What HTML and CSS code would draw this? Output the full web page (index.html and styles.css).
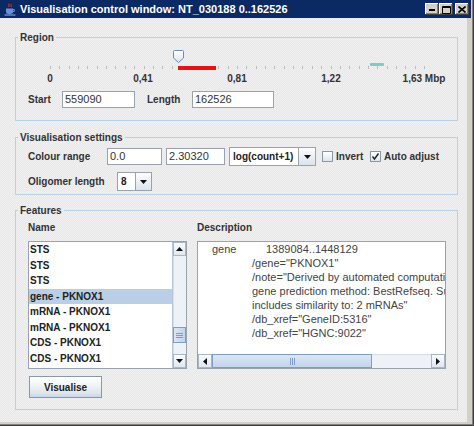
FILE: index.html
```html
<!DOCTYPE html>
<html>
<head>
<meta charset="utf-8">
<title>Visualisation control window</title>
<link rel="stylesheet" href="styles.css">
</head>
<body>
<div class="window">
  <div class="titlebar">
    <svg class="app-icon" width="12" height="13" viewBox="0 0 12 13">
      <path d="M5 0.5c-1.2 1 1 2-0.2 3.5M7.2 1c-1 1 0.8 1.8-0.2 3" stroke="#e23a2a" stroke-width="1" fill="none"/>
      <path d="M2 5.5h7v3a2.5 2.5 0 0 1-2.5 2.5h-2A2.5 2.5 0 0 1 2 8.5z" fill="#6f8fd8"/>
      <path d="M9 6.5h1.3v2H9" stroke="#6f8fd8" fill="none"/>
      <path d="M0.5 12h11" stroke="#9fb4e6"/>
    </svg>
    <span class="title">Visualisation control window: NT_030188 0..162526</span>
    <div class="wbtns">
      <span class="wbtn"><svg width="6" height="2" viewBox="0 0 6 2"><rect width="6" height="2" fill="#000"/></svg></span>
      <span class="wbtn"><svg width="9" height="8" viewBox="0 0 9 8"><path d="M0.5 0.5h8v7h-8z M0.5 1.5h8" stroke="#000" fill="none"/></svg></span>
      <span class="wbtn close"><svg width="8" height="7" viewBox="0 0 8 7"><path d="M0.5 0.5l7 6M7.5 0.5l-7 6" stroke="#000" stroke-width="1.6" fill="none"/></svg></span>
    </div>
  </div>

  <div class="body">
    <fieldset class="panel region">
      <legend>Region</legend>
      <div class="panel-body region-body">
        <div class="slider">
          <svg class="ticks" width="418" height="4" viewBox="0 0 418 4">
            <path d="M22.5 0v3M31.5 0v3M41.5 0v3M50.5 0v3M59.5 0v3M69.5 0v3M78.5 0v3M87.5 0v3M97.5 0v3M106.5 0v3M116.5 0v3M125.5 0v3M134.5 0v3M144.5 0v3M153.5 0v3M162.5 0v3M172.5 0v3M181.5 0v3M190.5 0v3M200.5 0v3M209.5 0v3M218.5 0v3M228.5 0v3M237.5 0v3M246.5 0v3M256.5 0v3M265.5 0v3M274.5 0v3M284.5 0v3M293.5 0v3M303.5 0v3M312.5 0v3M321.5 0v3M331.5 0v3M340.5 0v3M349.5 0v3M359.5 0v3M368.5 0v3M377.5 0v3M387.5 0v3M396.5 0v3" stroke="#bcbcbc" stroke-width="1"/>
          </svg>
          <span class="sel-bar"></span>
          <span class="view-bar"></span>
          <svg class="thumb" width="13" height="15" viewBox="0 0 13 15">
            <defs>
              <linearGradient id="tg" x1="0" y1="0" x2="0" y2="1">
                <stop offset="0" stop-color="#ffffff"/>
                <stop offset="1" stop-color="#d9e5f2"/>
              </linearGradient>
            </defs>
            <path d="M1.5 2.5a1 1 0 0 1 1-1h8a1 1 0 0 1 1 1v6.5l-5 4.5-5-4.5z" fill="url(#tg)" stroke="#6b8db3"/>
          </svg>
          <span class="tick-label l0">0</span>
          <span class="tick-label l1">0,41</span>
          <span class="tick-label l2">0,81</span>
          <span class="tick-label l3">1,22</span>
          <span class="tick-label l4">1,63 Mbp</span>
        </div>
        <div class="row region-row">
          <span class="lbl w-start">Start</span>
          <span class="field w-startf">559090</span>
          <span class="lbl w-length">Length</span>
          <span class="field w-lengthf">162526</span>
        </div>
      </div>
    </fieldset>

    <fieldset class="panel settings">
      <legend>Visualisation settings</legend>
      <div class="panel-body settings-body">
        <div class="row">
          <span class="lbl w-colour">Colour range</span>
          <span class="field w-min">0.0</span>
          <span class="field w-max">2.30320</span>
          <div class="combo w-log">
            <span class="combo-val">log(count+1)</span>
            <span class="combo-btn w-logbtn"><svg width="7" height="4" viewBox="0 0 7 4"><path d="M0 0h7L3.5 4z" fill="#111"/></svg></span>
          </div>
          <span class="check"></span>
          <span class="lbl w-invert">Invert</span>
          <span class="check checked"><svg width="9" height="9" viewBox="0 0 9 9"><path d="M1.5 4.5l2 2.5 4-5.5" stroke="#222" stroke-width="1.4" fill="none"/></svg></span>
          <span class="lbl">Auto adjust</span>
        </div>
        <div class="row row2">
          <span class="lbl w-olig">Oligomer length</span>
          <div class="combo w-8">
            <span class="combo-val">8</span>
            <span class="combo-btn w-8btn"><svg width="7" height="4" viewBox="0 0 7 4"><path d="M0 0h7L3.5 4z" fill="#111"/></svg></span>
          </div>
        </div>
      </div>
    </fieldset>

    <fieldset class="panel features">
      <legend>Features</legend>
      <div class="panel-body features-body">
        <div class="feat-grid">
          <div class="col-head">Name</div>
          <div class="col-head">Description</div>
          <div class="list-box">
            <div class="list">
              <div class="item">STS</div>
              <div class="item">STS</div>
              <div class="item">STS</div>
              <div class="item sel">gene - PKNOX1</div>
              <div class="item">mRNA - PKNOX1</div>
              <div class="item">mRNA - PKNOX1</div>
              <div class="item">CDS - PKNOX1</div>
              <div class="item">CDS - PKNOX1</div>
            </div>
            <div class="vscroll">
              <span class="sbtn"><svg width="7" height="4" viewBox="0 0 7 4"><path d="M0 4h7L3.5 0z" fill="#111"/></svg></span>
              <div class="vtrack">
                <span class="vthumb"><svg width="7" height="5" viewBox="0 0 7 5"><path d="M0 0.5h7M0 2.5h7M0 4.5h7" stroke="#7f9dc4"/></svg></span>
              </div>
              <span class="sbtn"><svg width="7" height="4" viewBox="0 0 7 4"><path d="M0 0h7L3.5 4z" fill="#111"/></svg></span>
            </div>
          </div>
          <div class="desc-box">
            <div class="desc-text">
              <div class="dl first"><span class="dk">gene</span><span>1389084..1448129</span></div>
              <div class="dl">/gene="PKNOX1"</div>
              <div class="dl">/note="Derived by automated computational analysis using</div>
              <div class="dl">gene prediction method: BestRefseq. Supporting evidence</div>
              <div class="dl">includes similarity to: 2 mRNAs"</div>
              <div class="dl">/db_xref="GeneID:5316"</div>
              <div class="dl">/db_xref="HGNC:9022"</div>
            </div>
            <div class="hscroll">
              <span class="sbtn h"><svg width="4" height="7" viewBox="0 0 4 7"><path d="M4 0v7L0 3.5z" fill="#111"/></svg></span>
              <span class="hthumb"><svg width="5" height="7" viewBox="0 0 5 7"><path d="M0.5 0v7M2.5 0v7M4.5 0v7" stroke="#7f9dc4"/></svg></span>
              <span class="htrack"></span>
              <span class="sbtn h"><svg width="4" height="7" viewBox="0 0 4 7"><path d="M0 0v7L4 3.5z" fill="#111"/></svg></span>
            </div>
          </div>
        </div>
        <button class="btn">Visualise</button>
      </div>
    </fieldset>
  </div>
</div>
</body>
</html>
```

FILE: styles.css
```css
* { box-sizing: border-box; }

html, body {
  margin: 0;
  padding: 0;
}

body {
  width: 474px;
  height: 426px;
  overflow: hidden;
  font-family: "Liberation Sans", Arial, sans-serif;
  background: #d4d0c8;
}

.window {
  width: 474px;
  height: 426px;
  display: flex;
  flex-direction: column;
  background: #d4d0c8;
  padding: 0 3px 3px 0;
  box-shadow: inset -1px -1px 0 #404040, inset -2px -2px 0 #808080;
}

/* title bar */
.titlebar {
  height: 18px;
  flex: none;
  display: flex;
  align-items: center;
  padding-left: 4px;
  background: #0b2a63;
  color: #fff;
}

.app-icon {
  flex: none;
  margin-right: 4px;
}

.title {
  flex: 1;
  font-size: 11px;
  font-weight: bold;
  white-space: nowrap;
}

.wbtns {
  display: flex;
  margin-right: 2px;
}

.wbtn {
  width: 14px;
  height: 12px;
  display: flex;
  align-items: center;
  justify-content: center;
  background: #d4d0c8;
  box-shadow: inset -1px -1px 0 #404040, inset 1px 1px 0 #ffffff, inset -2px -2px 0 #808080;
}

.wbtn svg { margin-top: 1px; }

.wbtn.close { margin-left: 2px; }

/* client area */
.body {
  flex: 1;
  margin: 0 4px 1px 0;
  padding-top: 13px;
  background-color: #ececec;
  background-image: repeating-conic-gradient(#e8e8e8 0 25%, #f0f0f0 0 50%);
  background-size: 2px 2px;
}

.panel {
  margin: 0 0 0 15px;
  width: 443px;
  min-width: 0;
  padding: 0;
  border: 1px solid #b8cfe5;
}

.panel legend {
  margin-left: 2px;
  padding: 0 2px;
  font-size: 10px;
  font-weight: bold;
  line-height: 13px;
  color: #333;
}

.settings { margin-top: 10px; }
.features { margin-top: 9px; }

.panel-body { padding: 0 11px 11px 12px; }
.settings-body { padding: 3px 11px 3px 12px; }
.features-body { padding: 4px 11px 11px 12px; }

/* slider */
.slider {
  position: relative;
  height: 42px;
}

.ticks {
  position: absolute;
  left: 0;
  top: 22px;
}

.sel-bar {
  position: absolute;
  left: 150px;
  top: 22px;
  width: 38px;
  height: 4px;
  background: #e41414;
}

.view-bar {
  position: absolute;
  left: 342px;
  top: 19px;
  width: 14px;
  height: 3px;
  border-radius: 1px;
  background: #8cc5c5;
}

.thumb {
  position: absolute;
  left: 144px;
  top: 5px;
}

.tick-label {
  position: absolute;
  top: 29px;
  font-size: 10px;
  font-weight: bold;
  line-height: 12px;
  color: #333;
  white-space: nowrap;
  transform: translateX(-50%);
}

.l0 { left: 22px; }
.l1 { left: 115px; }
.l2 { left: 209px; }
.l3 { left: 303px; }
.l4 { left: 396px; }

/* rows */
.row {
  display: flex;
  align-items: center;
  height: 19px;
}

.region-row {
  margin-top: 4px;
}

.row2 { margin-top: 6px; }

.lbl {
  font-size: 10px;
  font-weight: bold;
  color: #333;
  white-space: nowrap;
  flex: none;
}

.w-start { width: 34px; }
.w-length { width: 45px; margin-left: 12px; }
.w-colour { width: 79px; }
.w-invert { width: 28px; margin-left: 3px; }
.w-olig { width: 89px; }

.field {
  flex: none;
  height: 17px;
  padding-left: 2px;
  background: #fff;
  border: 1px solid #9aa3ad;
  font-size: 11px;
  line-height: 15px;
  color: #333;
}

.w-startf { width: 73px; }
.w-lengthf { width: 82px; }
.w-min { width: 55px; }
.w-max { width: 59px; margin-left: 4px; }

.combo {
  flex: none;
  display: flex;
  height: 19px;
  background: #fff;
  border: 1px solid #9aa3ad;
}

.w-log { width: 87px; margin-left: 4px; }
.w-8 { width: 35px; }

.combo-val {
  flex: 1;
  padding-left: 3px;
  font-size: 10px;
  font-weight: bold;
  line-height: 17px;
  color: #222;
}

.combo-btn {
  flex: none;
  display: flex;
  align-items: center;
  justify-content: center;
  border-left: 1px solid #9aa3ad;
  background: linear-gradient(#fdfdfe, #dbe3ed);
}

.w-logbtn { width: 17px; }
.w-8btn { width: 16px; }

.check {
  flex: none;
  width: 11px;
  height: 11px;
  margin-left: 6px;
  display: flex;
  align-items: center;
  justify-content: center;
  border: 1px solid #8a97a6;
  background: linear-gradient(#ffffff, #dce5ef);
}

.check.checked { margin-right: 3px; }

/* features */
.feat-grid {
  display: grid;
  grid-template-columns: 159px 249px;
  column-gap: 10px;
}

.col-head {
  font-size: 10px;
  font-weight: bold;
  line-height: 13px;
  color: #333;
  margin-bottom: 7px;
}

.list-box {
  height: 128px;
  display: flex;
  background: #fff;
  border: 1px solid #9aa3ad;
}

.list { flex: 1; }

.item {
  height: 15.5px;
  padding-left: 1px;
  font-size: 10px;
  font-weight: bold;
  line-height: 15.5px;
  color: #222;
  white-space: nowrap;
}

.item.sel { background: #b8cfe5; }

.vscroll {
  width: 14px;
  flex: none;
  display: flex;
  flex-direction: column;
  border-left: 1px solid #b8c6d6;
  background: #eef2f7;
}

.sbtn {
  flex: none;
  height: 14px;
  display: flex;
  align-items: center;
  justify-content: center;
  background: linear-gradient(#fbfcfe, #dfe7f0);
  border: 1px solid #a9b6c5;
}

.sbtn.h {
  width: 14px;
  height: auto;
}

.vtrack {
  flex: 1;
  border-left: 1px solid #d3dfec;
}

.vthumb {
  display: flex;
  align-items: center;
  justify-content: center;
  height: 16px;
  margin: 71px 0 0 -1px;
  background: linear-gradient(90deg, #dbe6f3, #c2d5ea);
  border: 1px solid #7f9dc4;
}

.desc-box {
  height: 128px;
  display: flex;
  flex-direction: column;
  background: #fff;
  border: 1px solid #9aa3ad;
}

.desc-text {
  flex: 1;
  overflow: hidden;
  font-size: 11px;
  line-height: 14px;
  color: #444;
  white-space: nowrap;
}

.dl { padding-left: 54px; }

.dl.first {
  display: flex;
  padding-left: 14px;
}

.dk { width: 54px; }

.hscroll {
  flex: none;
  height: 14px;
  display: flex;
  background: #eef2f7;
}

.hthumb {
  width: 160px;
  display: flex;
  align-items: center;
  justify-content: center;
  background: linear-gradient(#dbe6f3, #c2d5ea);
  border: 1px solid #7f9dc4;
}

.htrack {
  flex: 1;
  border-top: 1px solid #d3dfec;
}

.btn {
  display: block;
  width: 73px;
  height: 22px;
  margin: 7px 0 0 1px;
  padding: 0;
  border: 1px solid #8a97a6;
  background: linear-gradient(#ffffff 0%, #f1f4f8 40%, #dfe5ec 80%, #c6d6ea 100%);
  font-family: "Liberation Sans", Arial, sans-serif;
  font-size: 10px;
  font-weight: bold;
  color: #222;
}
```
